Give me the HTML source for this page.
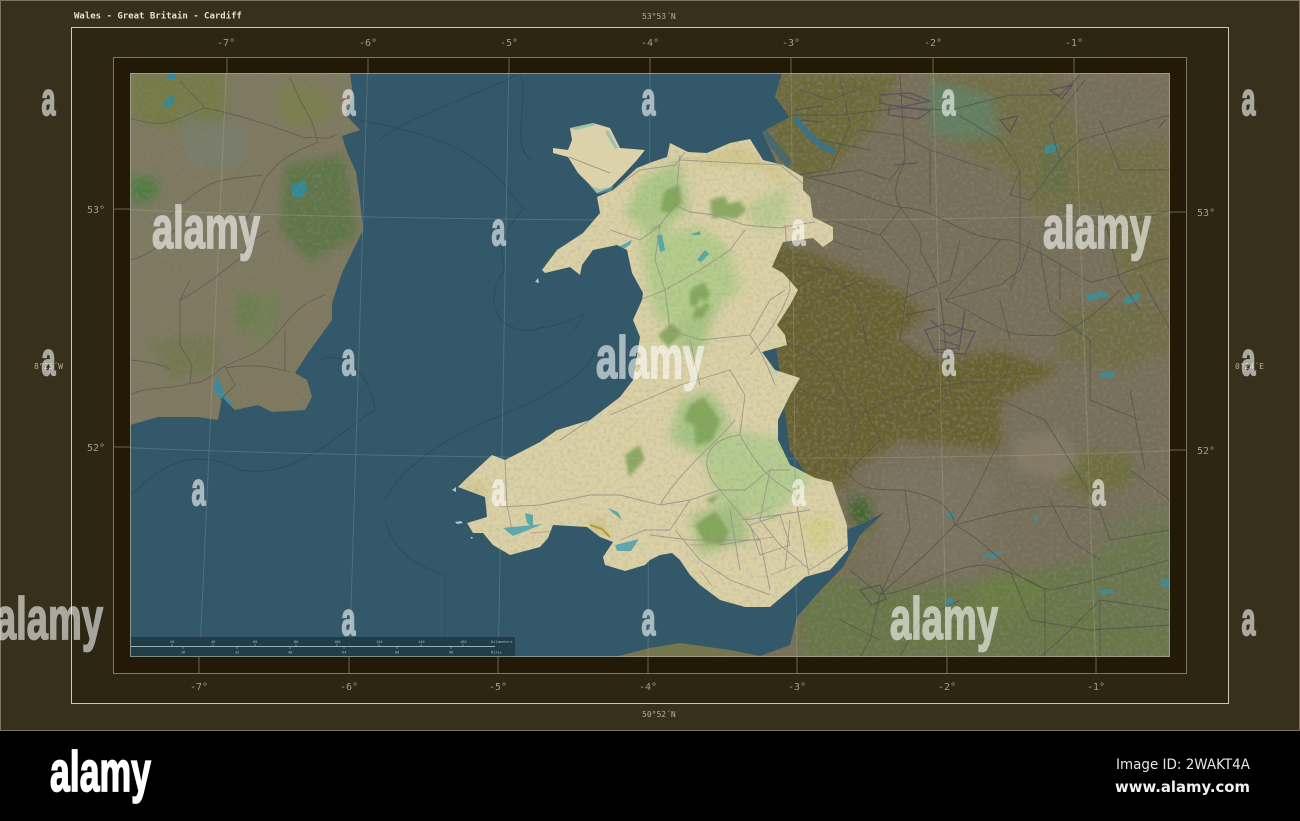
<!DOCTYPE html>
<html lang="en"><head><meta charset="utf-8"><title>Wales - Great Britain - Cardiff</title>
<style>html,body{margin:0;padding:0;background:#000;width:1300px;height:821px;overflow:hidden}svg{display:block}
.m{font-family:"DejaVu Sans Mono","Liberation Mono",monospace;font-size:10px;fill:#a39d84}
.c{font-family:"DejaVu Sans Mono","Liberation Mono",monospace;font-size:8px;fill:#b5af98}
.s{font-family:"DejaVu Sans Mono","Liberation Mono",monospace;font-size:3.6px;fill:#a9bcc0}
.w{font-family:"Liberation Sans",sans-serif;font-weight:700;stroke-width:1.7}
.wm text{fill:#fff;stroke:#fff;opacity:.58}
</style></head><body>
<svg width="1300" height="821" viewBox="0 0 1300 821" xmlns="http://www.w3.org/2000/svg">
<defs>
<filter id="b6" x="-30%" y="-30%" width="160%" height="160%"><feGaussianBlur stdDeviation="5"/></filter>
<filter id="b2" x="-30%" y="-30%" width="160%" height="160%"><feGaussianBlur stdDeviation="1.5"/></filter>
<filter id="n" x="0" y="0" width="100%" height="100%"><feTurbulence type="fractalNoise" baseFrequency=".28" numOctaves="2" seed="5"/><feColorMatrix values="0 0 0 0 .22  0 0 0 0 .22  0 0 0 0 .18  2.2 0 0 0 -.95"/></filter>
<clipPath id="map"><rect x="130" y="73" width="1040" height="584"/></clipPath>
<clipPath id="ire"><path d="M130,73H350L353,95 346,115 360,130 342,136 347,152 356,172 360,200 363,230 358,240 342,273 332,303 332,320 308,353 295,373 307,380 312,397 305,410 272,412 258,405 235,410 222,397 218,420 198,417 158,417 130,425Z"/></clipPath>
<clipPath id="eng"><path d="M782,73H1170V657H615L650,648 680,643 730,650 760,656 790,645 797,617 818,593 843,567 860,535 885,512 862,524 845,530 790,450 770,300 780,170 762,132 790,117 775,97Z"/></clipPath>
<clipPath id="wal"><path d="M613,190L637,168 652,162 667,157 670,143 688,152 707,153 730,143 750,139 763,160 783,165 803,177 803,190 810,197 813,217 833,227 833,240 823,247 813,238 783,242 772,267 783,273 798,290 790,305 777,325 785,335 787,345 762,352 775,370 800,378 790,395 778,420 778,440 790,465 815,478 832,482 847,525 848,550 830,570 805,577 790,590 770,607 745,607 720,600 700,585 690,575 680,560 672,553 660,555 650,560 645,565 625,571 605,565 603,557 613,542 600,537 587,527 553,525 548,538 540,547 510,555 493,545 483,533 473,533 467,523 487,517 485,497 458,487 467,478 492,455 505,460 540,442 557,430 590,420 620,397 633,380 640,337 633,320 642,300 643,293 632,273 627,250 617,245 593,250 582,265 580,275 570,267 545,273 542,270 557,250 583,233 600,213 597,197Z"/></clipPath>
</defs>

<rect width="1300" height="821" fill="#000"/>
<rect x=".5" y=".5" width="1299" height="730" fill="#37301c" stroke="#7d7562"/>
<rect x="71.500" y="27.500" width="1157" height="676" fill="#2c2613" stroke="#cfc8ac"/>
<rect x="113.500" y="57.500" width="1073" height="616" fill="#221a07" stroke="#7f7860"/>

<g stroke="#6b664f" stroke-width="1" fill="none">
<path d="M227,57V73M368,57V73M509,57V73M650,57V73M791,57V73M933,57V73M1074,57V73"/>
<path d="M199,657V673M349,657V673M498,657V673M648,657V673M797,657V673M947,657V673M1096,657V673"/>
<path d="M113,209H130M113,447H130M1170,212H1186M1170,450H1186"/>
</g>

<g clip-path="url(#map)">
<rect x="130" y="73" width="1040" height="584" fill="#33586a"/>
<g fill="none" stroke="#2c4c5c" stroke-width="1">
<path d="M520,73C530,100 510,140 530,160M360,120C430,135 480,145 520,205 535,210 490,225 505,270 480,300 500,340 540,328 590,320 590,300 575,330"/>
<path d="M130,495C150,480 180,440 240,470 300,480 340,430 375,410 370,370 340,350 320,360"/>
<path d="M520,73C490,90 400,120 380,140M385,500C400,470 440,440 490,420 540,400 590,375 595,350"/>
<path d="M385,520C395,560 430,570 445,575V640"/>
</g>
<!-- Ireland -->
<g clip-path="url(#ire)">
<rect x="130" y="73" width="240" height="360" fill="#7f7960"/>
<g filter="url(#b6)">
<path d="M130,73H225V120L200,130 150,125 130,110Z" fill="#757b44"/>
<path d="M280,80L320,90 340,110 300,130 280,115Z" fill="#7b8144" opacity=".7"/>
<path d="M285,165L345,155 358,235 310,262 280,230Z" fill="#5e7646"/>
<path d="M130,175L160,180 155,200 130,205Z" fill="#4f7d42"/>
<path d="M180,110L250,130 240,170 190,165Z" fill="#76806f" opacity=".6"/>
<path d="M150,340L215,335 220,370 170,380Z" fill="#6f784a" opacity=".7"/>
<path d="M240,290L260,300 250,330 235,325Z" fill="#68804a"/>
<path d="M250,300L285,290 270,340 250,350Z" fill="#6d834c" opacity=".6"/>
</g>
<path d="M292,185l12,-5 4,8 -6,10 -10,-2Z" fill="#2d8b98"/><path d="M165,100l8,-5 2,5 -6,8 -5,-2Z" fill="#2f8b9b"/>
<path d="M168,73h8v6h-8Z" fill="#2f8b9b"/><path d="M213,388l4,-12 3,6 5,14 8,8 -7,3 -6,-8Z" fill="#3d8a9c"/>
<rect x="130" y="73" width="240" height="360" filter="url(#n)" opacity=".6"/>
<g fill="none" stroke="#5f5b52" stroke-width=".9" opacity=".85">
<path d="M130,118C170,130 170,120 205,108 240,115 270,125 305,138 320,135 325,142 335,135"/>
<path d="M180,81L205,108M290,78L300,100 312,122 318,142"/>
<path d="M318,142C300,150 275,158 262,185 255,205 250,215 240,225"/>
<path d="M262,175C240,178 215,178 200,190 190,197 180,205 170,215"/>
<path d="M130,395C150,385 175,390 190,383 205,385 215,372 225,366 245,355 255,360 280,330 300,305 310,300 325,295"/>
<path d="M190,280L180,300V345L192,365 190,383M220,400L235,385 225,366"/>
<path d="M225,368C260,362 280,370 290,372M285,330V370M180,300C200,290 225,270 240,258 250,240 260,235 270,230"/>
<path d="M130,260C145,258 160,245 175,230M130,360C150,362 165,365 170,370"/>
</g>
</g>
<!-- England -->
<g clip-path="url(#eng)">
<rect x="600" y="73" width="570" height="584" fill="#776f58"/>
<g filter="url(#b6)">
<path d="M775,73H900L870,130 830,170 790,185 770,130Z" fill="#6c6a39"/>
<path d="M930,73H1050L1090,150 1170,140 1170,290 1130,300 1100,210 1040,215 1010,175 950,140Z" fill="#6f6e3c" opacity=".7"/>
<path d="M930,80L990,95 1000,135 960,140 930,130Z" fill="#618060"/>
<path d="M1040,140L1065,145 1070,195 1040,190Z" fill="#5a7040" opacity=".5"/>
<path d="M760,240L805,250 900,290 925,315 895,340 935,360 1000,350 1060,370 1000,400 1000,450 900,440 850,470 845,495 835,480 800,480 780,440 770,300Z" fill="#67612f"/>
<path d="M1060,310L1170,300 1170,350 1120,370 1060,360Z" fill="#6d6c38" opacity=".6"/>
<path d="M1060,450L1130,455 1135,480 1090,500 1060,480Z" fill="#6d6e36" opacity=".8"/>
<path d="M800,570L900,590 1000,580 1090,560 1170,520V657H800Z" fill="#687745"/>
<path d="M970,585L1010,570 1050,590 1010,620 980,610Z" fill="#6a7d3f"/>
<path d="M855,520L880,530 840,570 820,580Z" fill="#757245" opacity=".6"/>
<path d="M850,495l18,4 6,26 -14,4 -10,-10Z" fill="#44662f"/>
<path d="M1015,440L1060,430 1080,460 1060,480 1015,470Z" fill="#847a64"/>
<path d="M880,470L960,465 1000,480 975,575 890,570 880,510Z" fill="#7e7464" opacity=".7"/>
<path d="M1170,500L1110,520 1060,600 1170,640Z" fill="#6b7650" opacity=".6"/>
</g>
<rect x="600" y="73" width="570" height="584" filter="url(#n)" opacity=".75"/>
<path d="M1045,145l14,-1 -4,8 -10,2ZM1125,297l16,-4 -3,8 -15,4ZM1085,295l20,-4 5,5 -22,5Z" fill="#3c8e99" opacity=".85"/>
<path d="M945,600l8,-2v7h-8ZM980,555l22,-4 -8,8ZM1100,590h14v4h-14ZM1100,373l14,-2 1,7h-15ZM950,510l-5,8 10,-1ZM1030,515l8,2v7ZM1160,580l10,-3v10l-7,0Z" fill="#3a8d9f" opacity=".8"/>
<path d="M795,118C808,135 820,148 835,151" stroke="#3b7286" stroke-width="6" fill="none"/>
<path d="M760,128L790,165" stroke="#3a6676" stroke-width="8" fill="none" opacity=".7"/>
<g fill="none" stroke="#55534f" stroke-width=".9" opacity=".85">
<path d="M790,115H840L900,108 950,110 1010,95 1060,95 1080,75M840,80L850,125 830,170 780,178M900,75L905,160 890,180 860,170 810,177"/>
<path d="M805,177C860,190 880,205 900,207 945,210 960,240 1010,240 1040,250 1060,265 1090,282 1120,278 1150,260 1170,258"/>
<path d="M950,110L1000,140 1020,170 1010,195 1030,200 1060,160 1080,140 1150,120 1170,115M1020,170V260L1010,290M1085,80L1050,125 1060,160"/>
<path d="M905,160C900,175 890,190 900,207 912,225 925,235 920,250 930,270 940,280 942,310 945,330 945,355 950,385 940,410 930,420 910,415"/>
<path d="M902,207L880,235 830,220 800,240M870,360L860,310 835,270 800,265M945,300L1000,240M945,300L1000,285 1020,270M945,300C985,315 1000,340 1045,335 1060,340 1090,320 1120,290"/>
<path d="M1020,270L1030,240M1040,250L1050,310 1090,340 1090,400 1140,420M1140,275L1170,330M1100,200L1120,280 1140,310"/>
<path d="M850,420C880,405 900,390 950,385 990,375 1005,395 1010,360 1000,340M950,385L1000,440 1010,480M1010,360L1060,390 1110,360 1170,370M1060,390C1090,420 1110,430 1170,440"/>
<path d="M855,420L845,470M845,470C860,490 870,490 905,490 925,495 950,500 955,525 1010,510 1050,500 1100,510 1170,480"/>
<path d="M1000,440C985,470 975,495 955,525L925,555 880,595 850,570M955,525C1000,550 1010,580 1050,590 1080,585 1130,570 1170,560M1170,610L1100,600 1060,640 1040,657"/>
<path d="M880,595L870,640 860,657M880,595C920,590 950,565 985,565 1010,570 1040,585 1045,590V657M1000,400L1045,420 1100,510M1130,390L1145,470"/>
<path d="M770,340C800,345 830,350 855,420M775,380L840,405M790,290L830,270M880,235L910,270 900,340"/>
<path d="M800,90L830,100 870,85M860,130L900,135 930,150 990,170M820,140L870,150M930,150V205M1060,210L1110,230 1170,210M1100,120L1120,170 1170,170M960,240L950,280 900,300M1060,265V300M820,300L860,280 880,290M790,220L830,240 860,250"/>
<path d="M1000,300L1010,340M900,340L930,365 920,390M860,400L880,440 850,470M905,490L910,530 880,595M1100,510L1110,540 1170,530M1050,500L1070,540 1100,560M1010,570L1030,620 1090,630 1170,625M960,600L920,620 900,657M1100,600V657M840,620L880,640M1130,470L1170,500"/>
</g>
<g fill="none" stroke="#514b5c" stroke-width="1.3" opacity=".75">
<path d="M880,95l30,-2 20,8 -30,6 -20,-4ZM890,105l40,6 -12,8 -30,-4ZM925,330l20,-6 30,8 -10,22 -30,-2ZM930,320l20,16 14,-8M965,310l-6,40M1000,120l18,-4 -8,16ZM1050,90l22,-5 -10,14Z"/>
<path d="M795,110l28,-4M800,120l20,2M895,165l22,-2M905,315l30,-6M860,590l20,-5 6,14 -14,6ZM940,340l20,6M935,350l25,-2M900,95l20,6M1165,120l-6,8"/>
</g>
<path d="M615,657L650,648 680,643 730,650 760,656H615Z" fill="#75754e"/>
</g>
<!-- Wales -->
<path d="M570,128L593,123 610,128 620,148 645,150 637,160 623,175 610,188 597,193 590,185 578,173 568,157 553,153 553,148 568,150 572,140Z" fill="#dcd2aa"/>
<path d="M570,128l23,-5 3,2 -20,5ZM608,130l10,18 -3,1 -10,-17ZM590,186l10,3 14,-3 -3,5 -14,3Z" fill="#69b3ac" opacity=".55"/>
<path d="M569,157L610,173" stroke="#918c80" fill="none" stroke-width=".8"/>
<g clip-path="url(#wal)">
<rect x="450" y="130" width="400" height="480" fill="#dbd1a7"/>
<g filter="url(#b6)">
<path d="M640,180L680,160 690,210 670,225 655,240 625,215Z" fill="#adc788"/>
<path d="M640,240L700,225 730,250 740,290 690,330 655,320 645,270Z" fill="#b4cc8c"/>
<path d="M680,320L720,300 700,355 670,345Z" fill="#a9c484"/>
<path d="M745,205L790,185 785,225 755,230Z" fill="#b4c98c" opacity=".8"/>
<path d="M680,400L710,390 730,420 710,460 670,440Z" fill="#a8c585"/>
<path d="M735,430L790,440 810,480 770,520 720,510 700,450Z" fill="#b5cc90"/>
<path d="M690,515L740,500 750,540 700,555Z" fill="#a7c184"/>
<path d="M680,165L740,145 780,170 800,190 750,165Z" fill="#d0c588" opacity=".9"/>
<path d="M800,520l30,-5 6,25 -24,10Z" fill="#d4cd87" opacity=".8"/>
<path d="M458,487l25,-5 5,14 -20,-2Z" fill="#cbc07e" opacity=".7"/>
<path d="M590,520l15,0 0,15 -10,-2Z" fill="#c2b868" opacity=".6"/>
</g>
<g fill="#7fa357" opacity=".85" filter="url(#b2)">
<path d="M710,200l15,-4 3,8 12,-3 6,10 -10,8 -14,-2 -10,2ZM665,190l14,-5 3,18 -12,10 -10,-2ZM690,290l14,-8 6,12 -8,14 -12,-2ZM700,298l-8,20 10,0 8,-12ZM658,335l14,-12 10,10 -14,14ZM690,405l14,-8 16,24 -8,20 -16,4 -2,-20 -10,-4ZM625,455l14,-10 6,14 -16,18ZM695,525l20,-14 14,20 -6,14 -18,-2ZM770,360l6,-4 -2,14ZM705,500l14,-6 -6,10Z"/>
</g>
<g fill="#3e9fb0" opacity=".8"><path d="M657,236l5,-2 3,16 -5,2ZM630,245l-14,8 4,-7 12,-6ZM503,528l40,-4 -30,12ZM615,545l24,-6 -8,12 -14,0ZM612,512l-4,-4 10,4 4,8ZM525,513l8,2 0,12 -6,-4ZM690,235l10,-4v4ZM705,250l-8,10 4,2 8,-8Z"/></g>
<path d="M590,525l12,4 8,8" stroke="#b09f39" stroke-width="2" fill="none"/>
<g fill="none" stroke="#94908a" stroke-width=".9" opacity=".85">
<path d="M612,190L640,170 675,165 685,152M680,155L675,205 690,212 715,215 745,225 780,228 795,225 815,222M675,205L660,225"/>
<path d="M650,230L660,225 655,260 665,290 700,270 730,250 745,230M680,160L780,165 805,185M665,290L670,330 700,340 750,335 770,300 785,290"/>
<path d="M610,230L640,240 660,226M785,225L790,290M790,290C780,320 760,345 750,355M750,335C760,350 770,370 775,385"/>
<path d="M500,507L540,505 590,495 620,495 660,505 690,500 720,490 745,490 770,470 790,470M505,460L507,505 512,530M690,500L670,530 645,530 620,540"/>
<path d="M735,420C720,440 680,470 660,505M740,435C765,480 775,480 795,495 800,520 805,555 810,580M740,435C700,440 700,470 720,490M795,495V460"/>
<path d="M675,530L700,560 730,580 770,595M720,490L745,520 760,540 770,590M770,470L760,520 780,545 810,570 848,545M745,520L810,510M650,535L690,540 760,540"/>
<path d="M610,415L645,400 680,385 730,370 745,395 740,435M690,340L700,385M640,300L665,290M560,440L590,420"/>
<path d="M750,525l30,-10 10,30 -30,10ZM720,545l30,-5M790,520l-5,50M730,510l10,60"/>
</g>
<g fill="none" stroke="#b98f88" stroke-width=".9" opacity=".7"><path d="M742,520l20,-8 10,-6M750,540l24,-3M770,575l26,-10M700,570l12,16M690,545l18,0M530,533l28,-2"/></g>
<rect x="450" y="130" width="400" height="480" filter="url(#n)" opacity=".2"/>
</g>
<path d="M535,282l3,-4 1,5ZM455,522l6,-1 2,2 -6,1ZM452,490l4,-3v5ZM470,537l3,0-1,2Z" fill="#9fd0c7"/>
<g stroke="#cfd2c2" stroke-width="1" fill="none" opacity=".2">
<path d="M227,57L199,673M368,57L349,673M509,57L498,673M650,57L648,673M791,57L797,673M933,57L947,673M1074,57L1096,673"/>
<path d="M113,209C400,222 900,225 1186,212M113,447C400,460 900,463 1186,450"/>
</g>
<rect x="130" y="637" width="385" height="20" fill="#1f3944" fill-opacity=".88"/>
<path d="M131,646.500H495" stroke="#9fb0b3" stroke-width="1"/>
<path d="M130,644v5M172,644v3M213,644v3M255,644v3M296,644v3M337,644v3M379,644v3M421,644v3M463,644v3M130,647v2M183,647v2M237,647v2M290,647v2M344,647v2M397,647v2M451,647v2" stroke="#9fb0b3" stroke-width=".6"/>
<g class="s">
<text x="129" y="643">0</text><text x="170" y="643">20</text><text x="211" y="643">40</text><text x="253" y="643">60</text><text x="294" y="643">80</text><text x="334" y="643">100</text><text x="376" y="643">120</text><text x="418" y="643">140</text><text x="460" y="643">160</text><text x="491" y="643">Kilometers</text>
<text x="129" y="653.500">0</text><text x="181" y="653.500">16</text><text x="235" y="653.500">32</text><text x="288" y="653.500">48</text><text x="342" y="653.500">64</text><text x="395" y="653.500">80</text><text x="449" y="653.500">96</text><text x="491" y="653.500">Miles</text>
</g>
<rect x="130.500" y="73.500" width="1039" height="583" fill="none" stroke="#a8a896" stroke-opacity=".75"/>
</g>

<text x="74" y="18.500" font-family="'DejaVu Sans Mono','Liberation Mono',monospace" font-size="9" font-weight="700" fill="#e8e2c8">Wales - Great Britain - Cardiff</text>
<g class="c"><text x="642" y="19">53°53´N</text><text x="642" y="717">50°52´N</text><text x="34" y="369">8°25´W</text><text x="1235" y="369">0°24´E</text></g>
<g class="m">
<text x="217" y="46">-7°</text><text x="359" y="46">-6°</text><text x="500" y="46">-5°</text><text x="641" y="46">-4°</text><text x="782" y="46">-3°</text><text x="924" y="46">-2°</text><text x="1065" y="46">-1°</text>
<text x="190" y="690">-7°</text><text x="340" y="690">-6°</text><text x="489" y="690">-5°</text><text x="639" y="690">-4°</text><text x="788" y="690">-3°</text><text x="938" y="690">-2°</text><text x="1087" y="690">-1°</text>
<text x="87" y="213">53°</text><text x="87" y="451">52°</text><text x="1197" y="216">53°</text><text x="1197" y="454">52°</text>
</g>

<g class="w wm" font-size="59">
<text x="152" y="248" textLength="108" lengthAdjust="spacingAndGlyphs">alamy</text>
<text x="596" y="378" textLength="108" lengthAdjust="spacingAndGlyphs">alamy</text>
<text x="1043" y="248" textLength="108" lengthAdjust="spacingAndGlyphs">alamy</text>
<text x="890" y="639" textLength="108" lengthAdjust="spacingAndGlyphs">alamy</text>
<text x="-5" y="639" textLength="108" lengthAdjust="spacingAndGlyphs">alamy</text>
</g>
<g class="w wm" font-size="46">
<text x="41.500" y="115" textLength="14" lengthAdjust="spacingAndGlyphs">a</text><text x="341.500" y="115" textLength="14" lengthAdjust="spacingAndGlyphs">a</text><text x="641.500" y="115" textLength="14" lengthAdjust="spacingAndGlyphs">a</text><text x="941.500" y="115" textLength="14" lengthAdjust="spacingAndGlyphs">a</text><text x="1241.500" y="115" textLength="14" lengthAdjust="spacingAndGlyphs">a</text>
<text x="491.500" y="245" textLength="14" lengthAdjust="spacingAndGlyphs">a</text><text x="791.500" y="245" textLength="14" lengthAdjust="spacingAndGlyphs">a</text>
<text x="41.500" y="375" textLength="14" lengthAdjust="spacingAndGlyphs">a</text><text x="341.500" y="375" textLength="14" lengthAdjust="spacingAndGlyphs">a</text><text x="941.500" y="375" textLength="14" lengthAdjust="spacingAndGlyphs">a</text><text x="1241.500" y="375" textLength="14" lengthAdjust="spacingAndGlyphs">a</text>
<text x="191.500" y="505" textLength="14" lengthAdjust="spacingAndGlyphs">a</text><text x="491.500" y="505" textLength="14" lengthAdjust="spacingAndGlyphs">a</text><text x="791.500" y="505" textLength="14" lengthAdjust="spacingAndGlyphs">a</text><text x="1091.500" y="505" textLength="14" lengthAdjust="spacingAndGlyphs">a</text>
<text x="341.500" y="635" textLength="14" lengthAdjust="spacingAndGlyphs">a</text><text x="641.500" y="635" textLength="14" lengthAdjust="spacingAndGlyphs">a</text><text x="1241.500" y="635" textLength="14" lengthAdjust="spacingAndGlyphs">a</text>
</g>

<text class="w" x="50" y="791" font-size="57" fill="#fff" stroke="#fff" textLength="101" lengthAdjust="spacingAndGlyphs">alamy</text>
<text x="1116" y="769" font-family="'DejaVu Sans',sans-serif" font-size="14" fill="#e6e6e6" textLength="134" lengthAdjust="spacingAndGlyphs">Image ID: 2WAKT4A</text>
<text x="1115" y="792" font-family="'DejaVu Sans',sans-serif" font-size="15" font-weight="700" fill="#f2f2f2" textLength="135" lengthAdjust="spacingAndGlyphs">www.alamy.com</text>
</svg>
</body></html>
